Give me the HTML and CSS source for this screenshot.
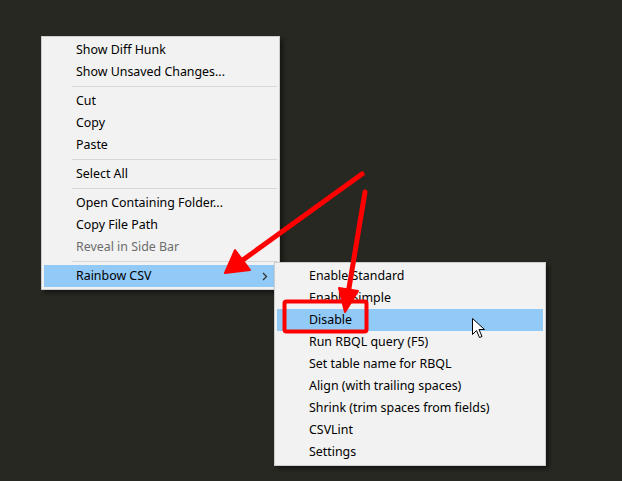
FILE: index.html
```html
<!DOCTYPE html>
<html>
<head>
<meta charset="utf-8">
<link rel="stylesheet" href="styles.css">
</head>
<body>
<div class="menu main-menu">
  <div class="item">Show Diff Hunk</div>
  <div class="item">Show Unsaved Changes...</div>
  <div class="sep"></div>
  <div class="item">Cut</div>
  <div class="item">Copy</div>
  <div class="item">Paste</div>
  <div class="sep"></div>
  <div class="item">Select All</div>
  <div class="sep"></div>
  <div class="item">Open Containing Folder...</div>
  <div class="item">Copy File Path</div>
  <div class="item disabled">Reveal in Side Bar</div>
  <div class="sep"></div>
  <div class="item active has-sub">Rainbow CSV
    <svg class="chev" width="6" height="9" viewBox="0 0 6 9"><path d="M1 1 L4.5 4.5 L1 8" fill="none" stroke="#333" stroke-width="1.3"/></svg>
    <div class="menu sub-menu">
      <div class="item">Enable Standard</div>
      <div class="item">Enable Simple</div>
      <div class="item active">Disable</div>
      <div class="item">Run RBQL query (F5)</div>
      <div class="item">Set table name for RBQL</div>
      <div class="item">Align (with trailing spaces)</div>
      <div class="item">Shrink (trim spaces from fields)</div>
      <div class="item">CSVLint</div>
      <div class="item">Settings</div>
    </div>
  </div>
</div>
<svg class="annot" width="622" height="481" viewBox="0 0 622 481">
  <rect x="284.5" y="301.5" width="82" height="30" rx="2" fill="none" stroke="#ff0000" stroke-width="4"/>
  <line x1="362" y1="174" x2="240" y2="262" stroke="#ff0000" stroke-width="5" stroke-linecap="round"/>
  <polygon points="225,273 250,270 235,250" fill="#ff0000" stroke="#ff0000" stroke-width="2" stroke-linejoin="round"/>
  <line x1="365" y1="192" x2="348" y2="294" stroke="#ff0000" stroke-width="5" stroke-linecap="round"/>
  <polygon points="345,312 358,291 339,288" fill="#ff0000" stroke="#ff0000" stroke-width="2" stroke-linejoin="round"/>
  <path class="cursor" d="M472.5 318.5 L472.5 334.5 L476.5 330.5 L479.5 337.5 L482 336.5 L479 329.5 L484.5 329.5 Z" fill="#fff" stroke="#000" stroke-width="1"/>
</svg>
</body>
</html>
```

FILE: styles.css
```css
html, body {
  margin: 0;
  padding: 0;
}
body {
  background: #272822;
  width: 622px;
  height: 481px;
  overflow: hidden;
  position: relative;
  font-family: "Noto Sans", "Liberation Sans", sans-serif;
  font-size: 12.4px;
  color: #000;
}
.menu {
  background: #f2f2f2;
  border: 1px solid #cccccc;
  padding: 2px;
  box-sizing: border-box;
  box-shadow: 3px 3px 4px rgba(0, 0, 0, 0.45);
}
.main-menu {
  margin-left: 41px;
  margin-top: 36px;
  width: 239px;
}
.item {
  height: 22px;
  line-height: 22px;
  padding-left: 32px;
  white-space: nowrap;
}
.item.active {
  background: #91c9f7;
}
.item.disabled {
  color: #6d6d6d;
}
.sep {
  height: 7px;
  position: relative;
}
.sep::after {
  content: "";
  position: absolute;
  left: 28px;
  right: 0;
  top: 3px;
  height: 1px;
  background: #d7d7d7;
}
.has-sub {
  position: relative;
}
.chev {
  position: absolute;
  right: 9px;
  top: 7px;
}
.sub-menu {
  position: absolute;
  left: calc(100% - 3px);
  top: -3px;
  width: 272px;
  z-index: 2;
}
.annot {
  position: absolute;
  left: 0;
  top: 0;
  z-index: 5;
  pointer-events: none;
}
```
